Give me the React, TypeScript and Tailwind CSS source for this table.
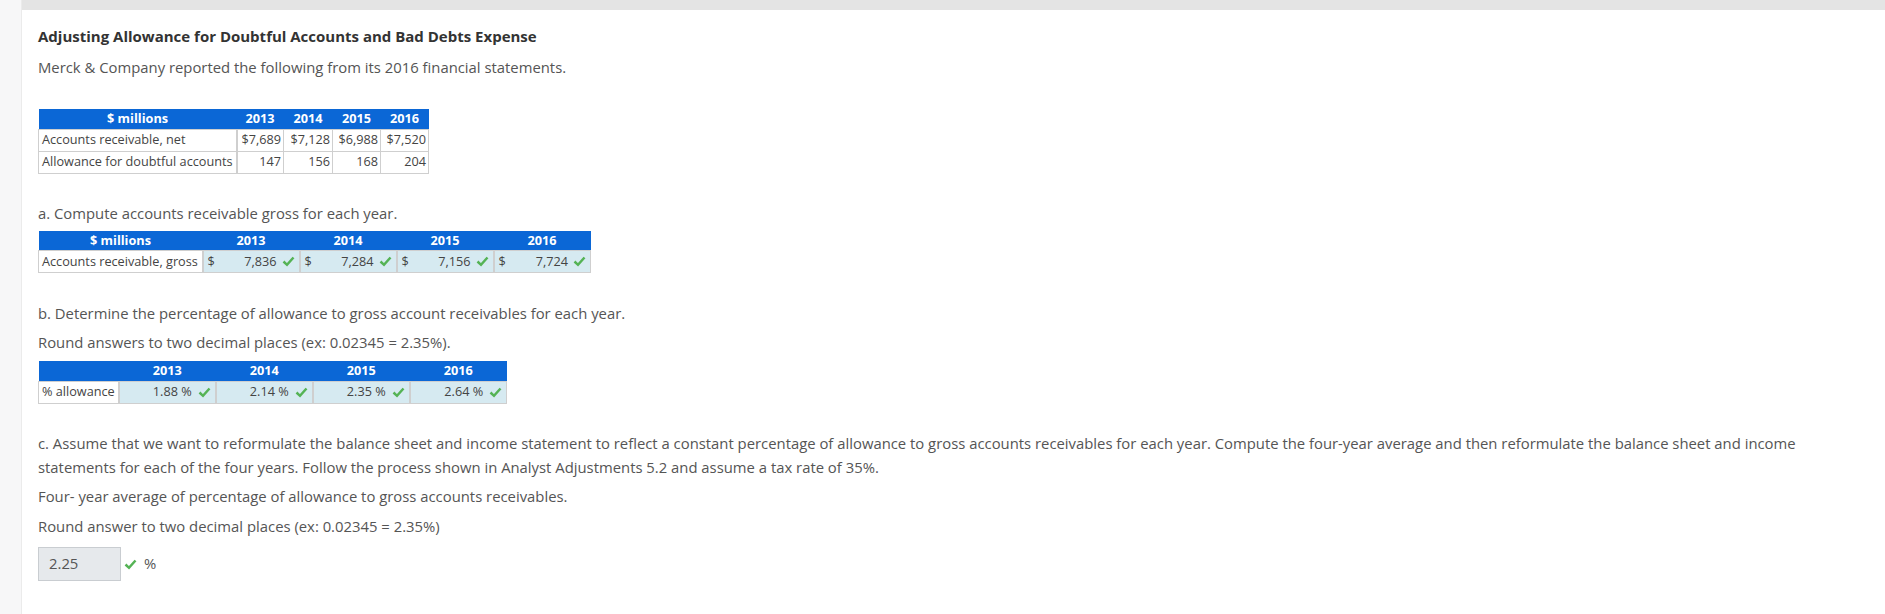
import React from "react";

function Check() {
  return (
    <svg width="13" height="12" viewBox="0 0 13 12" className="inline-block shrink-0">
      <path d="M1.5 6.5 L5 9.8 L11.5 2.5" fill="none" stroke="#55b355" strokeWidth="2.5" />
    </svg>
  );
}

const years = ["2013", "2014", "2015", "2016"];

const reported = [
  { label: "Accounts receivable, net", values: ["$7,689", "$7,128", "$6,988", "$7,520"] },
  { label: "Allowance for doubtful accounts", values: ["147", "156", "168", "204"] },
];

const gross = ["7,836", "7,284", "7,156", "7,724"];
const pct = ["1.88", "2.14", "2.35", "2.64"];

export default function App() {
  return (
    <div className="flex min-h-[614px] bg-white font-['Open_Sans',sans-serif] text-[#333]">
      <div className="w-[22px] shrink-0 bg-[#f7f7f8] border-r border-[#ebebeb]" />
      <div className="flex-1">
        <div className="h-[10px] bg-[#e4e4e4]" />
        <div className="pl-[16px] pr-[20px]">
          <h1 className="pt-[16px] text-[15px] leading-5 font-bold text-[#333]">
            Adjusting Allowance for Doubtful Accounts and Bad Debts Expense
          </h1>
          <p className="mt-[9px] text-[14.85px] leading-6 text-[#555]">
            Merck &amp; Company reported the following from its 2016 financial statements.
          </p>

          {/* reported figures */}
          <table className="mt-[30px] border-collapse text-[12.7px] text-[#444]">
            <thead>
              <tr className="bg-[#0b67d6] text-white font-bold">
                <th className="h-[20px] w-[198px] text-center font-bold">$ millions</th>
                <th className="w-[47px] text-center font-bold">2013</th>
                <th className="w-[49px] text-center font-bold">2014</th>
                <th className="w-[48px] text-center font-bold">2015</th>
                <th className="w-[48px] text-center font-bold">2016</th>
              </tr>
            </thead>
            <tbody>
              {reported.map((row) => (
                <tr key={row.label}>
                  <td className="h-[22px] border border-[#cfcfcf] border-r-2 px-[3px] whitespace-nowrap">
                    {row.label}
                  </td>
                  {row.values.map((v, i) => (
                    <td key={i} className="border border-[#cfcfcf] px-[2px] text-right">
                      {v}
                    </td>
                  ))}
                </tr>
              ))}
            </tbody>
          </table>

          {/* part a */}
          <p className="mt-[27px] text-[14.85px] leading-6 text-[#555]">
            a. Compute accounts receivable gross for each year.
          </p>
          <table className="mt-[6px] border-collapse text-[12.7px] text-[#444]">
            <thead>
              <tr className="bg-[#0b67d6] text-white">
                <th className="h-[20px] w-[164px] text-center font-bold">$ millions</th>
                {years.map((y) => (
                  <th key={y} className="w-[97px] text-center font-bold">
                    {y}
                  </th>
                ))}
              </tr>
            </thead>
            <tbody>
              <tr>
                <td className="h-[22px] border border-[#cfcfcf] px-[3px] whitespace-nowrap">
                  Accounts receivable, gross
                </td>
                {gross.map((v, i) => (
                  <td key={i} className="border border-[#cfcfcf] border-l-2 bg-[#d6eaf1] pl-[4px] pr-[4px]">
                    <div className="flex items-center">
                      <span>$</span>
                      <span className="ml-auto">{v}</span>
                      <span className="ml-[5px] flex"><Check /></span>
                    </div>
                  </td>
                ))}
              </tr>
            </tbody>
          </table>

          {/* part b */}
          <p className="mt-[28px] text-[14.85px] leading-6 text-[#555]">
            b. Determine the percentage of allowance to gross account receivables for each year.
          </p>
          <p className="mt-[5px] text-[14.85px] leading-6 text-[#555]">
            Round answers to two decimal places (ex: 0.02345 = 2.35%).
          </p>
          <table className="mt-[7px] border-collapse text-[12.7px] text-[#444]">
            <thead>
              <tr className="bg-[#0b67d6] text-white">
                <th className="h-[20px] w-[80px]" />
                {years.map((y) => (
                  <th key={y} className="w-[97px] text-center font-bold">
                    {y}
                  </th>
                ))}
              </tr>
            </thead>
            <tbody>
              <tr>
                <td className="h-[22px] border border-[#cfcfcf] px-[3px] whitespace-nowrap">% allowance</td>
                {pct.map((v, i) => (
                  <td key={i} className="border border-[#cfcfcf] border-l-2 bg-[#d6eaf1] pr-[4px]">
                    <div className="flex items-center justify-end">
                      <span>{v} %</span>
                      <span className="ml-[6px] flex"><Check /></span>
                    </div>
                  </td>
                ))}
              </tr>
            </tbody>
          </table>

          {/* part c */}
          <p className="mt-[27px] text-[14.85px] leading-6 text-[#555]">
            c. Assume that we want to reformulate the balance sheet and income statement to reflect a constant percentage of
            allowance to gross accounts receivables for each year. Compute the four-year average and then reformulate the
            balance sheet and income statements for each of the four years. Follow the process shown in Analyst Adjustments
            5.2 and assume a tax rate of 35%.
          </p>
          <p className="mt-[5px] text-[14.85px] leading-6 text-[#555]">
            Four- year average of percentage of allowance to gross accounts receivables.
          </p>
          <p className="mt-[6px] text-[14.85px] leading-6 text-[#555]">
            Round answer to two decimal places (ex: 0.02345 = 2.35%)
          </p>
          <div className="mt-[9px] flex items-center">
            <div className="flex h-[34px] w-[83px] items-center border border-[#c9cdd1] bg-[#e6e9ec] pl-[10px] text-[14.85px] text-[#555]">
              2.25
            </div>
            <span className="ml-[3px] flex"><Check /></span>
            <span className="ml-[7px] text-[14.85px] text-[#555]">%</span>
          </div>
        </div>
      </div>
    </div>
  );
}
